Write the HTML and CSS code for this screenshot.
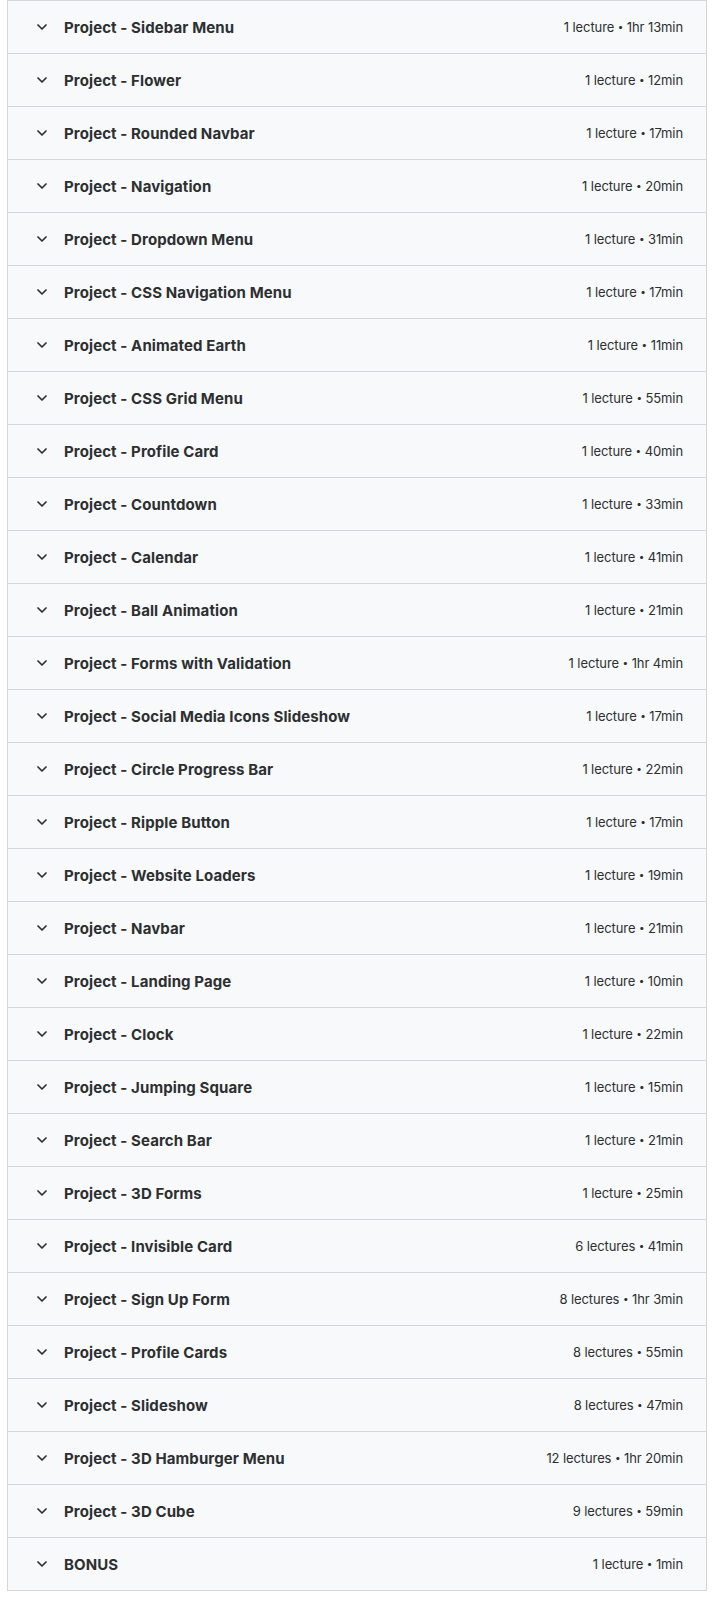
FILE: index.html
```html
<!DOCTYPE html>
<html>
<head lang="en">
  <meta charset="UTF-8">
  <title>Course content</title>
  <link rel="stylesheet" href="styles.css">
</head>
<body>
<div class="curriculum">
  <div class="section"><svg class="chevron" viewBox="0 0 10 6"><path d="M1 1l4 4 4-4"/></svg><span class="section-title">Project - Sidebar Menu</span><span class="section-meta">1 lecture <i>•</i> 1hr 13min</span></div>
  <div class="section"><svg class="chevron" viewBox="0 0 10 6"><path d="M1 1l4 4 4-4"/></svg><span class="section-title">Project - Flower</span><span class="section-meta">1 lecture <i>•</i> 12min</span></div>
  <div class="section"><svg class="chevron" viewBox="0 0 10 6"><path d="M1 1l4 4 4-4"/></svg><span class="section-title">Project - Rounded Navbar</span><span class="section-meta">1 lecture <i>•</i> 17min</span></div>
  <div class="section"><svg class="chevron" viewBox="0 0 10 6"><path d="M1 1l4 4 4-4"/></svg><span class="section-title">Project - Navigation</span><span class="section-meta">1 lecture <i>•</i> 20min</span></div>
  <div class="section"><svg class="chevron" viewBox="0 0 10 6"><path d="M1 1l4 4 4-4"/></svg><span class="section-title">Project - Dropdown Menu</span><span class="section-meta">1 lecture <i>•</i> 31min</span></div>
  <div class="section"><svg class="chevron" viewBox="0 0 10 6"><path d="M1 1l4 4 4-4"/></svg><span class="section-title">Project - CSS Navigation Menu</span><span class="section-meta">1 lecture <i>•</i> 17min</span></div>
  <div class="section"><svg class="chevron" viewBox="0 0 10 6"><path d="M1 1l4 4 4-4"/></svg><span class="section-title">Project - Animated Earth</span><span class="section-meta">1 lecture <i>•</i> 11min</span></div>
  <div class="section"><svg class="chevron" viewBox="0 0 10 6"><path d="M1 1l4 4 4-4"/></svg><span class="section-title">Project - CSS Grid Menu</span><span class="section-meta">1 lecture <i>•</i> 55min</span></div>
  <div class="section"><svg class="chevron" viewBox="0 0 10 6"><path d="M1 1l4 4 4-4"/></svg><span class="section-title">Project - Profile Card</span><span class="section-meta">1 lecture <i>•</i> 40min</span></div>
  <div class="section"><svg class="chevron" viewBox="0 0 10 6"><path d="M1 1l4 4 4-4"/></svg><span class="section-title">Project - Countdown</span><span class="section-meta">1 lecture <i>•</i> 33min</span></div>
  <div class="section"><svg class="chevron" viewBox="0 0 10 6"><path d="M1 1l4 4 4-4"/></svg><span class="section-title">Project - Calendar</span><span class="section-meta">1 lecture <i>•</i> 41min</span></div>
  <div class="section"><svg class="chevron" viewBox="0 0 10 6"><path d="M1 1l4 4 4-4"/></svg><span class="section-title">Project - Ball Animation</span><span class="section-meta">1 lecture <i>•</i> 21min</span></div>
  <div class="section"><svg class="chevron" viewBox="0 0 10 6"><path d="M1 1l4 4 4-4"/></svg><span class="section-title">Project - Forms with Validation</span><span class="section-meta">1 lecture <i>•</i> 1hr 4min</span></div>
  <div class="section"><svg class="chevron" viewBox="0 0 10 6"><path d="M1 1l4 4 4-4"/></svg><span class="section-title">Project - Social Media Icons Slideshow</span><span class="section-meta">1 lecture <i>•</i> 17min</span></div>
  <div class="section"><svg class="chevron" viewBox="0 0 10 6"><path d="M1 1l4 4 4-4"/></svg><span class="section-title">Project - Circle Progress Bar</span><span class="section-meta">1 lecture <i>•</i> 22min</span></div>
  <div class="section"><svg class="chevron" viewBox="0 0 10 6"><path d="M1 1l4 4 4-4"/></svg><span class="section-title">Project - Ripple Button</span><span class="section-meta">1 lecture <i>•</i> 17min</span></div>
  <div class="section"><svg class="chevron" viewBox="0 0 10 6"><path d="M1 1l4 4 4-4"/></svg><span class="section-title">Project - Website Loaders</span><span class="section-meta">1 lecture <i>•</i> 19min</span></div>
  <div class="section"><svg class="chevron" viewBox="0 0 10 6"><path d="M1 1l4 4 4-4"/></svg><span class="section-title">Project - Navbar</span><span class="section-meta">1 lecture <i>•</i> 21min</span></div>
  <div class="section"><svg class="chevron" viewBox="0 0 10 6"><path d="M1 1l4 4 4-4"/></svg><span class="section-title">Project - Landing Page</span><span class="section-meta">1 lecture <i>•</i> 10min</span></div>
  <div class="section"><svg class="chevron" viewBox="0 0 10 6"><path d="M1 1l4 4 4-4"/></svg><span class="section-title">Project - Clock</span><span class="section-meta">1 lecture <i>•</i> 22min</span></div>
  <div class="section"><svg class="chevron" viewBox="0 0 10 6"><path d="M1 1l4 4 4-4"/></svg><span class="section-title">Project - Jumping Square</span><span class="section-meta">1 lecture <i>•</i> 15min</span></div>
  <div class="section"><svg class="chevron" viewBox="0 0 10 6"><path d="M1 1l4 4 4-4"/></svg><span class="section-title">Project - Search Bar</span><span class="section-meta">1 lecture <i>•</i> 21min</span></div>
  <div class="section"><svg class="chevron" viewBox="0 0 10 6"><path d="M1 1l4 4 4-4"/></svg><span class="section-title">Project - 3D Forms</span><span class="section-meta">1 lecture <i>•</i> 25min</span></div>
  <div class="section"><svg class="chevron" viewBox="0 0 10 6"><path d="M1 1l4 4 4-4"/></svg><span class="section-title">Project - Invisible Card</span><span class="section-meta">6 lectures <i>•</i> 41min</span></div>
  <div class="section"><svg class="chevron" viewBox="0 0 10 6"><path d="M1 1l4 4 4-4"/></svg><span class="section-title">Project - Sign Up Form</span><span class="section-meta">8 lectures <i>•</i> 1hr 3min</span></div>
  <div class="section"><svg class="chevron" viewBox="0 0 10 6"><path d="M1 1l4 4 4-4"/></svg><span class="section-title">Project - Profile Cards</span><span class="section-meta">8 lectures <i>•</i> 55min</span></div>
  <div class="section"><svg class="chevron" viewBox="0 0 10 6"><path d="M1 1l4 4 4-4"/></svg><span class="section-title">Project - Slideshow</span><span class="section-meta">8 lectures <i>•</i> 47min</span></div>
  <div class="section"><svg class="chevron" viewBox="0 0 10 6"><path d="M1 1l4 4 4-4"/></svg><span class="section-title">Project - 3D Hamburger Menu</span><span class="section-meta">12 lectures <i>•</i> 1hr 20min</span></div>
  <div class="section"><svg class="chevron" viewBox="0 0 10 6"><path d="M1 1l4 4 4-4"/></svg><span class="section-title">Project - 3D Cube</span><span class="section-meta">9 lectures <i>•</i> 59min</span></div>
  <div class="section"><svg class="chevron" viewBox="0 0 10 6"><path d="M1 1l4 4 4-4"/></svg><span class="section-title">BONUS</span><span class="section-meta">1 lecture <i>•</i> 1min</span></div>
</div>
</body>
</html>
```

FILE: styles.css
```css
body {
  margin: 0px;
  background: #ffffff;
  font-family: Inter, "Noto Sans", sans-serif;
  color: #2d2f31;
}

.curriculum {
  width: 698px;
  margin-left: 7px;
  border: #d1d7dc solid 1px;
  background: #f7f9fa;
}

.section {
  display: flex;
  align-items: center;
  height: 52px;
  padding: 0px 23px 0px 29px;
  border-bottom: #d1d7dc solid 1px;
}

.section:last-child {
  border-bottom: none;
}

.chevron {
  width: 10px;
  height: 6px;
  margin-right: 17px;
  fill: none;
  stroke: #2d2f31;
  stroke-width: 1.7;
  stroke-linecap: round;
  stroke-linejoin: round;
}

.section-title {
  flex: 1;
  font-size: 15px;
  font-weight: 700;
  letter-spacing: 0.1px;
  color: #2d2f31;
}

.section-meta {
  font-size: 13px;
  letter-spacing: -0.1px;
  color: #2d2f31;
}

/* the dot between count and length is smaller than the text */
.section-meta i {
  font-style: normal;
  font-size: 10px;
  vertical-align: 2px;
}
```
